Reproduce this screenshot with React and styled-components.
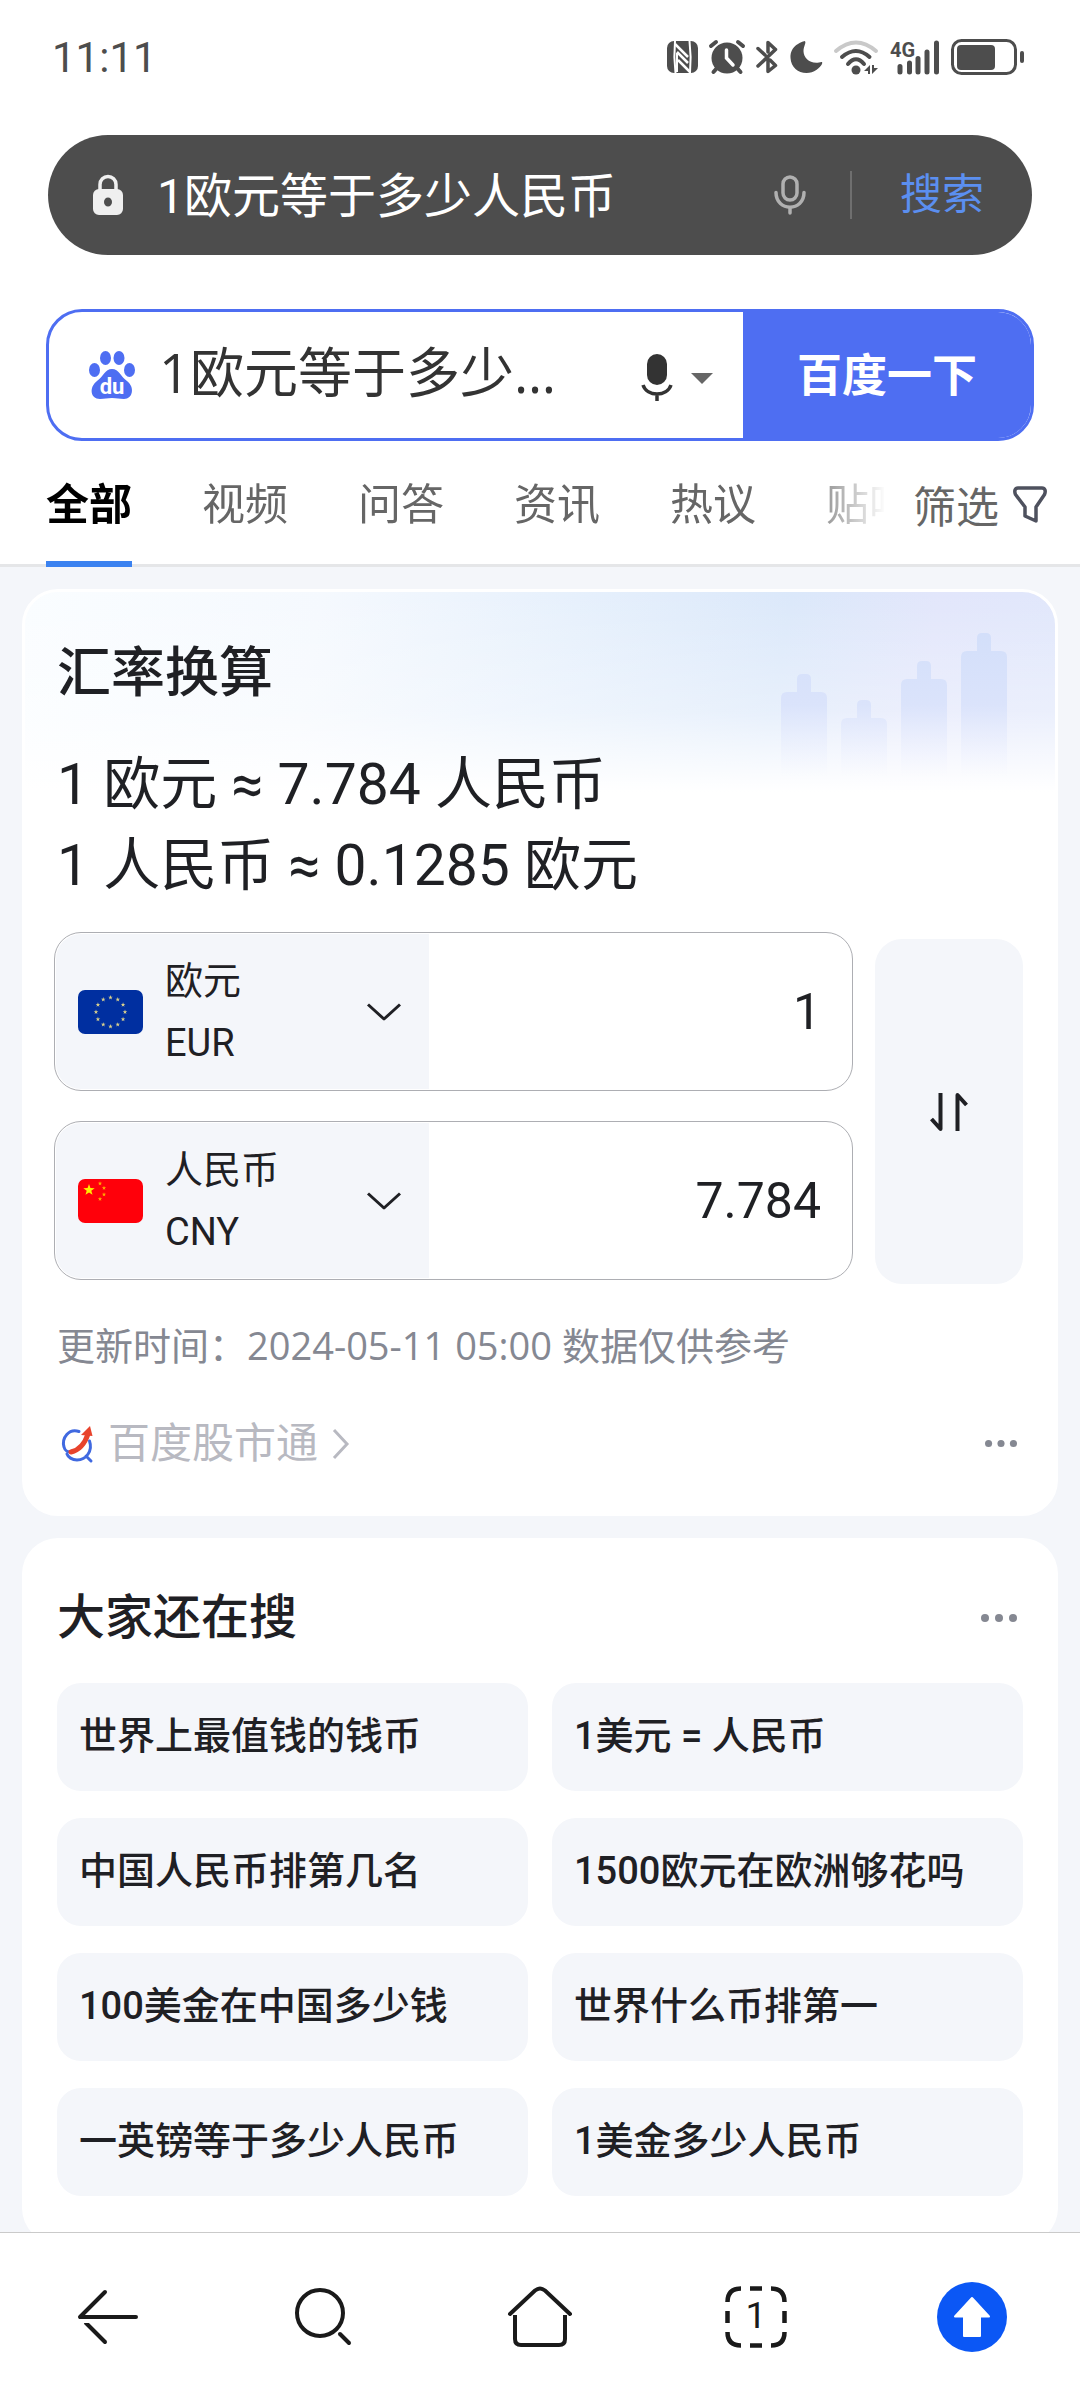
import React, { useState } from 'react';
import styled, { createGlobalStyle } from 'styled-components';

const RATE = 7.784;

const tabs = ['全部', '视频', '问答', '资讯', '热议', '贴吧'];

const related = [
    '世界上最值钱的钱币',
    '1美元 = 人民币',
    '中国人民币排第几名',
    '1500欧元在欧洲够花吗',
    '100美金在中国多少钱',
    '世界什么币排第一',
    '一英镑等于多少人民币',
    '1美金多少人民币',
];

const starPoints = (cx, cy, r) => {
    const points = [];
    for (let i = 0; i < 10; i++) {
        const radius = i % 2 ? r * 0.4 : r;
        const angle = (Math.PI / 5) * i - Math.PI / 2;
        points.push(`${cx + radius * Math.cos(angle)},${cy + radius * Math.sin(angle)}`);
    }
    return points.join(' ');
};

//icons

const NfcIcon = () => (
    <svg width='31' height='32' viewBox='0 0 31 32' fill='none'>
        <rect width='31' height='32' rx='7' fill='#4d4d4d' />
        <path d='M8 0Q6.500 16 8.500 32M22.500 0Q24.500 16 23 32' stroke='#fff' strokeWidth='2' />
        <path d='M8 3L21 16M10 11L21 22M11 19L23 31' stroke='#fff' strokeWidth='2.500' />
        <path d='M10 12V31' stroke='#fff' strokeWidth='2' />
    </svg>
);

const AlarmIcon = () => (
    <svg width='36' height='34' viewBox='0 0 36 34' fill='none' stroke='#4d4d4d' strokeLinecap='round'>
        <circle cx='18' cy='18' r='15.500' fill='#4d4d4d' stroke='none' />
        <path d='M2 6L7 2M34 6L29 2M8 28L4.500 32M28 28L31.500 32' strokeWidth='4' />
        <path d='M17.500 10V18L24 25' stroke='#fff' strokeWidth='3.500' />
    </svg>
);

const BluetoothIcon = () => (
    <svg width='23' height='34' viewBox='0 0 23 34' fill='none' stroke='#4d4d4d' strokeWidth='3.500' strokeLinecap='round' strokeLinejoin='round'>
        <path d='M2 8.500L9 15M2 26L19.500 9.500L12 2.500V12M12 19V31.500L19.500 25.500L14 20' />
    </svg>
);

const MoonIcon = () => (
    <svg width='33' height='34' viewBox='0 0 33 34'>
        <path fill='#4d4d4d' d='M14.500 1C12 2 0 5 .5 18C1 27 8 33 16.500 33C24 33 30 28 32 24C33 21 31 22 29 22.500C20 24 13.500 18 13.500 11C13.500 6 17 2 14.500 1Z' />
    </svg>
);

const WifiIcon = () => (
    <svg width='45' height='35' viewBox='0 0 45 35' fill='none' stroke='#4d4d4d' strokeWidth='4' strokeLinecap='round'>
        <path d='M2 11Q22 -6 42 11' stroke='#c9c9c9' />
        <path d='M8 17Q22 5 35.500 17M14 24Q22 14.500 30 24' />
        <circle cx='22' cy='30' r='4.500' fill='#4d4d4d' stroke='none' />
        <path d='M30 31L36 25V34H34V31ZM38 25H40V28H44L38 34Z' fill='#4d4d4d' stroke='none' />
    </svg>
);

const SignalIcon = () => (
    <svg width='50' height='35' viewBox='0 0 50 35' stroke='#4d4d4d' strokeWidth='5' strokeLinecap='round'>
        <text x='0' y='17' fill='#4d4d4d' stroke='none' fontFamily='Roboto, sans-serif' fontWeight='700' fontSize='20'>4G</text>
        <path d='M10 26.500V32M19.500 23V32M28 18.500V32M37 12V32M46.500 3V32' />
    </svg>
);

const BatteryIcon = () => (
    <svg width='74' height='36' viewBox='0 0 74 36' fill='none'>
        <rect x='1.500' y='1.500' width='63' height='33' rx='9' stroke='#4d4d4d' strokeWidth='3' />
        <rect x='6' y='6' width='38' height='25' rx='4' fill='#4d4d4d' />
        <rect x='69' y='12' width='4' height='12' rx='2' fill='#4d4d4d' />
    </svg>
);

const LockIcon = () => (
    <svg width='30' height='40' viewBox='0 0 30 40' fill='none'>
        <path d='M7 17V9.500a8 8 0 0 1 16 0V17' stroke='#efefef' strokeWidth='3.500' />
        <path fillRule='evenodd' d='M6 14H24a6 6 0 0 1 6 6V34a6 6 0 0 1-6 6H6a6 6 0 0 1-6-6V20a6 6 0 0 1 6-6ZM15 22.500a4 4.500 0 1 0 0 9a4 4.500 0 1 0 0-9Z' fill='#efefef' />
    </svg>
);

const MicOutlineIcon = () => (
    <svg width='32' height='40' viewBox='0 0 32 40' fill='none' stroke='#b0b0b0' strokeWidth='3.500' strokeLinecap='round'>
        <rect x='9' y='2' width='14' height='23' rx='7' />
        <path d='M2 17.500C2 37 30 37 30 17.500M16 33V38' />
    </svg>
);

const MicIcon = () => (
    <svg width='32' height='48' viewBox='0 0 32 48' fill='none'>
        <rect x='6' y='0' width='20' height='31' rx='10' fill='#333' />
        <path d='M2 31C6 43 26 43 30 31M16 40V47' stroke='#333' strokeWidth='3.500' />
    </svg>
);

const PawLogo = () => (
    <svg width='46' height='49' viewBox='0 0 46 49' fill='#4e6ef2'>
        <ellipse cx='16.500' cy='7' rx='5.500' ry='7' />
        <ellipse cx='30' cy='7' rx='5.500' ry='7' />
        <ellipse cx='5.500' cy='19' rx='5.500' ry='7' />
        <ellipse cx='40.500' cy='19' rx='5.500' ry='7' />
        <path d='M23 18C30 18 32 26 38 30C46 36 44 48 35 48C30 48 28 47 23 47C18 47 16 48 11 48C1 48 0 36 8 30C14 26 16 18 23 18Z' />
        <text x='23' y='43' textAnchor='middle' fill='#fff' fontFamily='Roboto, sans-serif' fontWeight='700' fontSize='22'>du</text>
    </svg>
);

const FunnelIcon = () => (
    <svg width='34' height='37' viewBox='0 0 34 37' fill='none' stroke='#4e515e' strokeWidth='3.500' strokeLinejoin='round'>
        <path d='M5 2H29C32 2 33 5 31.500 8.500L23 21V35L12 30V21L2.500 8.500C1 5 2 2 5 2Z' />
    </svg>
);

const CandleChart = styled.svg`
    position: absolute;
    top: 41px;
    right: 48px;
`;

const Candles = () => (
    <CandleChart width='226' height='157' viewBox='0 0 226 157' aria-hidden='true'>
        <defs>
            <linearGradient id='candle' gradientUnits='userSpaceOnUse' x1='0' y1='0' x2='0' y2='144'>
                <stop offset='0' stopColor='#d3dffa' />
                <stop offset='.5' stopColor='#d9e2fb' stopOpacity='.9' />
                <stop offset='1' stopColor='#eef1fe' stopOpacity='0' />
            </linearGradient>
        </defs>
        {[[0, 41], [60, 67], [120, 28], [180, 0]].map(([x, y]) => (
            <path
                key={x}
                fill='url(#candle)'
                d={`M${x + 16} ${y + 18}V${y + 5}q0-5 5-5h4q5 0 5 5V${y + 18}h10q6 0 6 6V157H${x}V${y + 24}q0-6 6-6Z`}
            />
        ))}
    </CandleChart>
);

const EuFlag = () => (
    <svg width='65' height='44' viewBox='0 0 65 44'>
        <rect width='65' height='44' rx='7' fill='#002fa0' />
        {Array.from({ length: 12 }, (_, i) => (
            <polygon
                key={i}
                fill='#d9d08c'
                points={starPoints(32.5 + 14.5 * Math.sin((i * Math.PI) / 6), 22 - 14.5 * Math.cos((i * Math.PI) / 6), 2.4)}
            />
        ))}
    </svg>
);

const CnFlag = () => (
    <svg width='65' height='44' viewBox='0 0 65 44'>
        <rect width='65' height='44' rx='7' fill='#ff000a' />
        <polygon fill='#ffee00' points={starPoints(11, 11, 6)} />
        {[[22, 4.5], [26, 9], [26, 15.5], [22, 20]].map(([x, y]) => (
            <polygon key={y} fill='#ffae00' points={starPoints(x, y, 2.2)} />
        ))}
    </svg>
);

const ChevronDown = () => (
    <svg width='34' height='18' viewBox='0 0 34 18' fill='none' stroke='#1f2024' strokeWidth='3' strokeLinejoin='round'>
        <path d='M1 1.500L17 16L33 1.500' />
    </svg>
);

const SwapIcon = () => (
    <svg width='38' height='38' viewBox='0 0 38 38' fill='none' stroke='#1f2024' strokeWidth='4' strokeLinejoin='round'>
        <path d='M10.500 0V36L1.500 26M27.500 38V2L36.500 12' />
    </svg>
);

const StockLogo = () => (
    <svg width='34' height='40' viewBox='0 0 34 40' fill='none' strokeLinecap='round'>
        <path d='M19 7.500C9 4 1.500 14 4 23C5 27 8 29 12 27' stroke='#4069e0' strokeWidth='3' />
        <path d='M29.500 17C33 27 26 36 17 36C12 36 8 33 7 30M26 32L31 37' stroke='#4069e0' strokeWidth='3' />
        <path d='M11 28C20 26 25 19 28 10' stroke='#e8432c' strokeWidth='5' />
        <path d='M21 11L30 2L32.500 12Z' fill='#e8432c' />
    </svg>
);

const ChevronRight = () => (
    <svg width='18' height='30' viewBox='0 0 18 30' fill='none' stroke='#b8b9c1' strokeWidth='3'>
        <path d='M2 1L15 15L2 29' />
    </svg>
);

const DotsIcon = ({ width = 36 }) => (
    <svg width={width} height={width * 8 / 36} viewBox='0 0 36 8' fill='#858892'>
        <circle cx='4' cy='4' r='4' />
        <circle cx='18' cy='4' r='4' />
        <circle cx='32' cy='4' r='4' />
    </svg>
);

const BackIcon = () => (
    <svg width='60' height='56' viewBox='0 0 60 56' fill='none' stroke='#1a1a1a' strokeWidth='4' strokeLinecap='round'>
        <path d='M27 3L2 28H58' strokeLinejoin='round' />
        <path d='M8 34L27 53' />
        <path d='M3 32H14' stroke='#fff' strokeLinecap='butt' />
    </svg>
);

const SearchIcon = () => (
    <svg width='60' height='60' viewBox='0 0 60 60' fill='none' stroke='#1a1a1a' strokeWidth='4' strokeLinecap='round'>
        <circle cx='26' cy='26' r='23' />
        <path d='M46 47L55 56' />
    </svg>
);

const HomeIcon = () => (
    <svg width='66' height='62' viewBox='0 0 66 62' fill='none' stroke='#1a1a1a' strokeWidth='4'>
        <path d='M3 28L28 4.500Q33 .5 38 4.500L63 28' strokeLinecap='round' />
        <path d='M8 29V53Q8 59 14 59H52Q58 59 58 53V29' />
    </svg>
);

const TabsIcon = () => (
    <svg width='62' height='62' viewBox='0 0 62 62' fill='none' stroke='#1a1a1a' strokeWidth='4.500'>
        <path d='M2.500 16Q2.500 2.500 16 2.500M46 2.500Q59.500 2.500 59.500 16M59.500 46Q59.500 59.500 46 59.500M16 59.500Q2.500 59.500 2.500 46' />
        <path d='M25 2.500H37M59.500 25V37M37 59.500H25M2.500 37V25' />
        <text x='31' y='42' textAnchor='middle' fill='#1a1a1a' stroke='none' fontFamily='Roboto, sans-serif' fontSize='37'>1</text>
    </svg>
);

const UpIcon = () => (
    <svg width='70' height='70' viewBox='0 0 70 70'>
        <circle cx='35' cy='35' r='35' fill='#0b57f5' />
        <path d='M35 16L52 34.500H43V54H27V34.500H18Z' fill='#fff' stroke='#fff' strokeWidth='2' strokeLinejoin='round' />
    </svg>
);

const CurrencyField = ({ flag, name, code, value, onChange }) => (
    <Field>
        <CurrencyButton type='button'>
            {flag}
            <CurrencyName>
                <span>{name}</span>
                <span>{code}</span>
            </CurrencyName>
            <ChevronDown />
        </CurrencyButton>
        <Amount aria-label={name} value={value} onChange={onChange} inputMode='decimal' />
    </Field>
);

const App = () => {
    const [address, setAddress] = useState('1欧元等于多少人民币');
    const [query, setQuery] = useState('1欧元等于多少人民币');
    const [active, setActive] = useState('全部');
    const [eur, setEur] = useState('1');
    const [cny, setCny] = useState('7.784');
    const [swapped, setSwapped] = useState(false);

    const handleEur = e => {
        setEur(e.target.value);
        setCny(String(+(e.target.value * RATE).toFixed(4) || ''));
    };

    const handleCny = e => {
        setCny(e.target.value);
        setEur(String(+(e.target.value / RATE).toFixed(4) || ''));
    };

    return (
        <Screen>
            <GlobalStyle />
            <StatusBar>
                <time>11:11</time>
                <StatusIcons>
                    <NfcIcon />
                    <AlarmIcon />
                    <BluetoothIcon />
                    <MoonIcon />
                    <WifiIcon />
                    <SignalIcon />
                    <BatteryIcon />
                </StatusIcons>
            </StatusBar>
            <AddressBar>
                <LockIcon />
                <AddressInput aria-label='地址' value={address} onChange={e => setAddress(e.target.value)} />
                <IconButton type='button' aria-label='语音'><MicOutlineIcon /></IconButton>
                <AddressSubmit type='button'>搜索</AddressSubmit>
            </AddressBar>
            <Page>
                <Header>
                    <SearchForm onSubmit={e => e.preventDefault()}>
                        <PawLogo />
                        <SearchInput aria-label='百度搜索' value={query} onChange={e => setQuery(e.target.value)} />
                        <VoiceButton type='button' aria-label='语音搜索'>
                            <MicIcon />
                            <Caret />
                        </VoiceButton>
                        <SearchSubmit>百度一下</SearchSubmit>
                    </SearchForm>
                    <TabBar>
                        <TabList>
                            {tabs.map(tab => (
                                <Tab key={tab} type='button' $active={tab === active} onClick={() => setActive(tab)}>{tab}</Tab>
                            ))}
                        </TabList>
                        <FilterButton type='button'>
                            筛选
                            <FunnelIcon />
                        </FilterButton>
                    </TabBar>
                </Header>
                <Feed>
                    <RateCard>
                        <Candles />
                        <CardTitle $large>汇率换算</CardTitle>
                        <Rates>
                            <p>1 欧元 ≈ 7.784 人民币</p>
                            <p>1 人民币 ≈ 0.1285 欧元</p>
                        </Rates>
                        <Converter>
                            <Fields $swapped={swapped}>
                                <CurrencyField flag={<EuFlag />} name='欧元' code='EUR' value={eur} onChange={handleEur} />
                                <CurrencyField flag={<CnFlag />} name='人民币' code='CNY' value={cny} onChange={handleCny} />
                            </Fields>
                            <SwapButton type='button' aria-label='交换' onClick={() => setSwapped(!swapped)}><SwapIcon /></SwapButton>
                        </Converter>
                        <Note>更新时间：2024-05-11 05:00 数据仅供参考</Note>
                        <SourceRow>
                            <SourceLink href='#source'>
                                <StockLogo />
                                百度股市通
                                <ChevronRight />
                            </SourceLink>
                            <IconButton type='button' aria-label='更多'><DotsIcon width={32} /></IconButton>
                        </SourceRow>
                    </RateCard>
                    <Card>
                        <CardRow>
                            <CardTitle>大家还在搜</CardTitle>
                            <IconButton type='button' aria-label='更多'><DotsIcon /></IconButton>
                        </CardRow>
                        <RelatedGrid>
                            {related.map(text => <Related key={text} href='#search'>{text}</Related>)}
                        </RelatedGrid>
                    </Card>
                </Feed>
            </Page>
            <BottomNav>
                <NavButton aria-label='返回'><BackIcon /></NavButton>
                <NavButton aria-label='搜索'><SearchIcon /></NavButton>
                <NavButton aria-label='主页'><HomeIcon /></NavButton>
                <NavButton aria-label='标签页'><TabsIcon /></NavButton>
                <NavButton aria-label='顶部'><UpIcon /></NavButton>
            </BottomNav>
        </Screen>
    );
};

export default App;

//styles

const GlobalStyle = createGlobalStyle`
    * {
        box-sizing: border-box;
        margin: 0;
        padding: 0;
    }
    body {
        background: #ffffff;
        color: #1f2024;
    }
    body, button, input {
        font-family: Roboto, 'Noto Sans CJK SC', sans-serif;
    }
    button, input {
        border: none;
        background: none;
        color: inherit;
        outline: none;
    }
    a {
        color: inherit;
        text-decoration: none;
    }
    svg {
        display: block;
        flex: none;
        overflow: visible;
    }
`;

const Screen = styled.div`
    height: 100vh;
    display: flex;
    flex-direction: column;
    overflow: hidden;
`;

const StatusBar = styled.div`
    display: flex;
    justify-content: space-between;
    align-items: center;
    flex: none;
    height: 114px;
    padding: 0 55px 0 52px;
    color: #4d4d4d;
    font-size: 42px;
`;

const StatusIcons = styled.div`
    display: flex;
    align-items: center;
    gap: 11px;
`;

const AddressBar = styled.div`
    display: flex;
    align-items: center;
    flex: none;
    height: 120px;
    margin: 21px 48px 0;
    padding: 0 48px 0 45px;
    border-radius: 60px;
    background: #4d4d4d;
`;

const AddressInput = styled.input`
    flex: 1;
    min-width: 0;
    margin-left: 34px;
    padding-bottom: 6px;
    color: #ffffff;
    font-size: 48px;
`;

const IconButton = styled.button`
    display: flex;
    align-items: center;
    justify-content: center;
    padding: 6px;
`;

const AddressSubmit = styled.button`
    margin-left: 38px;
    padding-left: 48px;
    border-left: 2px solid #6f6f6f;
    color: #5b8ff0;
    font-size: 42px;
    line-height: 48px;
`;

const Page = styled.main`
    flex: 1;
    min-height: 0;
    overflow-y: auto;
    scrollbar-width: none;
    background: #f4f6fa;
`;

const Header = styled.header`
    padding-top: 54px;
    background: #ffffff;
`;

const SearchForm = styled.form`
    display: flex;
    align-items: center;
    height: 132px;
    margin: 0 46px;
    padding-left: 40px;
    border: 3px solid #4e6ef2;
    border-radius: 36px;
    overflow: hidden;
`;

const SearchInput = styled.input`
    flex: 1;
    min-width: 0;
    margin: 0 60px 0 24px;
    padding-bottom: 12px;
    color: #333333;
    font-family: 'Open Sans', 'Noto Sans CJK SC', sans-serif;
    font-size: 54px;
    text-overflow: ellipsis;
`;

const VoiceButton = styled.button`
    display: flex;
    align-items: center;
    gap: 18px;
    padding: 6px 30px 0 0;
`;

const Caret = styled.span`
    border: 11px solid transparent;
    border-bottom-width: 0;
    border-top-color: #666666;
`;

const SearchSubmit = styled.button`
    align-self: stretch;
    width: 288px;
    padding-bottom: 6px;
    background: #4e6ef2;
    color: #ffffff;
    font-size: 45px;
    font-weight: 700;
`;

const TabBar = styled.nav`
    display: flex;
    padding: 0 33px 0 46px;
    box-shadow: inset 0 -3px #e5e6e8;
`;

const TabList = styled.div`
    display: flex;
    flex: 1;
    min-width: 0;
    gap: 70px;
    overflow: hidden;
    mask-image: linear-gradient(90deg, #000 calc(100% - 90px), transparent);
`;

const Tab = styled.button`
    flex: none;
    padding: 34px 0 26px;
    border-bottom: 6px solid ${({ $active }) => ($active ? '#3b82f0' : 'transparent')};
    color: ${({ $active }) => ($active ? '#000000' : '#666666')};
    font-size: 43px;
    font-weight: ${({ $active }) => ($active ? 700 : 400)};
    line-height: 60px;
`;

const FilterButton = styled.button`
    display: flex;
    align-items: center;
    gap: 14px;
    margin-left: 27px;
    color: #666666;
    font-size: 43px;
`;

const Feed = styled.div`
    display: flex;
    flex-direction: column;
    gap: 22px;
    padding: 22px;
`;

const Card = styled.section`
    padding: 48px 35px;
    border-radius: 36px;
    background: #ffffff;
`;

const RateCard = styled(Card)`
    position: relative;
    padding: 46px 32px 39px;
    border: 3px solid #ffffff;
    background:
        linear-gradient(180deg, rgba(255, 255, 255, 0), rgba(255, 255, 255, .35) 60%, #ffffff) 0 0 / 100% 200px no-repeat,
        linear-gradient(100deg, #fafdff, #f5f9fe 28%, #e6f0fc 52%, #dbe8fa 72%, #e2e6fb 86%, #e0e7fb) 0 0 / 100% 200px no-repeat,
        #ffffff;
`;

const CardTitle = styled.h2`
    position: relative;
    font-size: ${({ $large }) => ($large ? 54 : 48)}px;
    font-weight: 500;
    line-height: ${({ $large }) => ($large ? 72 : 64)}px;
`;

const Rates = styled.div`
    position: relative;
    margin-top: 34px;
    font-size: 57px;
    line-height: 81px;
`;

const Converter = styled.div`
    display: flex;
    gap: 22px;
    margin: 26px 0 0 -3px;
`;

const Fields = styled.div`
    display: flex;
    flex-direction: ${({ $swapped }) => ($swapped ? 'column-reverse' : 'column')};
    flex: 1;
    min-width: 0;
    gap: 30px;
    padding-bottom: 4px;
`;

const Field = styled.div`
    display: flex;
    height: 159px;
    padding: 1px;
    border: 1px solid #adaeb3;
    border-radius: 27px;
`;

const CurrencyButton = styled.button`
    display: flex;
    align-items: center;
    flex: none;
    width: 373px;
    padding: 0 28px 0 22px;
    border-radius: 25px 0 0 25px;
    background: #f4f6fa;
`;

const CurrencyName = styled.span`
    display: flex;
    flex-direction: column;
    flex: 1;
    margin-left: 22px;
    font-size: 38px;
    line-height: 62px;
    text-align: left;
`;

const Amount = styled.input`
    flex: 1;
    min-width: 0;
    padding: 0 30px;
    font-size: 50px;
    text-align: right;
`;

const SwapButton = styled.button`
    display: flex;
    align-items: center;
    justify-content: center;
    flex: none;
    width: 148px;
    margin-top: 7px;
    border-radius: 27px;
    background: #f4f6fa;
`;

const Note = styled.p`
    margin-top: 34px;
    color: #858892;
    font-family: 'Open Sans', 'Noto Sans CJK SC', sans-serif;
    font-size: 38px;
    line-height: 54px;
`;

const CardRow = styled.div`
    display: flex;
    align-items: center;
    justify-content: space-between;
`;

const SourceRow = styled(CardRow)`
    margin-top: 42px;
    padding-left: 3px;
`;

const SourceLink = styled.a`
    display: flex;
    align-items: center;
    gap: 14px;
    color: #b8b9c1;
    font-size: 42px;
    line-height: 60px;
`;

const RelatedGrid = styled.div`
    display: grid;
    grid-template-columns: 1fr 1fr;
    gap: 27px 24px;
    margin-top: 33px;
`;

const Related = styled.a`
    padding: 23px 22px 25px;
    border-radius: 24px;
    background: #f4f6fa;
    font-size: 38px;
    font-weight: 500;
    line-height: 60px;
`;

const BottomNav = styled.nav`
    display: grid;
    grid-template-columns: repeat(5, 1fr);
    flex: none;
    height: 168px;
    border-top: 1px solid #cacaca;
    background: #ffffff;
`;

const NavButton = styled.button`
    display: flex;
    align-items: center;
    justify-content: center;
`;
